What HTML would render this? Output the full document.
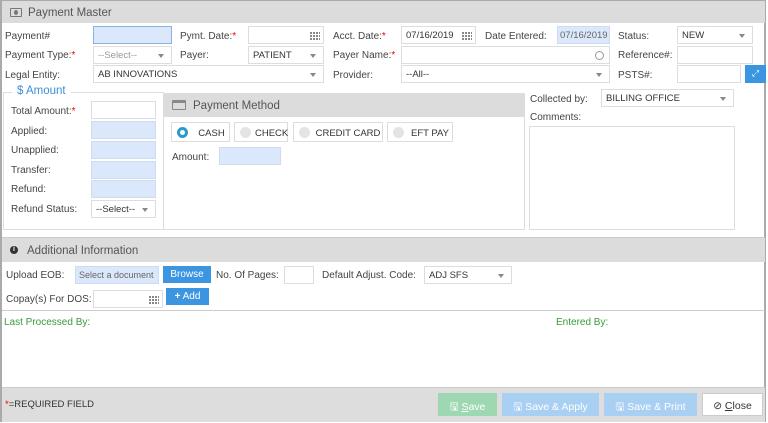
<!DOCTYPE html>
<html><head><style>
*{box-sizing:border-box;margin:0;padding:0}
body{width:768px;height:423px;background:#fff;font-family:"Liberation Sans",sans-serif;font-size:10px;color:#444;position:relative;overflow:hidden}
.a{position:absolute}
.l{position:absolute;white-space:nowrap;font-size:10px;color:#444}
.r{color:#e00}
.in{position:absolute;border:1px solid #ddd;background:#fff;height:18px}
.bl{background:#dbe8fb;border-color:#cfdcef}
.sel{position:absolute;border:1px solid #ddd;background:#fff;height:18px;padding:3px 4px;font-size:9.5px;color:#333;white-space:nowrap}
.sel:after{content:"";position:absolute;right:7px;top:7px;border:3.5px solid transparent;border-top:4px solid #888}
.cal{position:absolute;right:3px;top:4px;width:10px;height:9px;background:repeating-linear-gradient(90deg,#888 0 2px,#fff 2px 3px);}
.cal:before{content:"";position:absolute;inset:0;background:repeating-linear-gradient(0deg,transparent 0 2px,#fff 2px 3px)}
.hd{position:absolute;background:#dcdcdc;color:#555;font-size:11.5px}
.rb{position:absolute;border:1px solid #ddd;height:20px;top:122px;font-size:9.5px;color:#333;padding-top:5px;text-align:center}
.dot{position:absolute;left:5px;top:4px;width:11px;height:11px;border-radius:50%;background:#e4e4e4}
.btn{position:absolute;top:393px;height:23px;color:#fff;font-size:10.5px;text-align:center;padding-top:6px}
</style></head><body>
<div class="a" style="left:0;top:0;width:766px;height:422px;border:2px solid #aaa;border-top:1px solid #aaa"></div>
<div class="hd" style="left:2px;top:1px;width:763px;height:22px;padding:6px 0 0 26px">Payment Master</div>
<div class="a" style="left:10px;top:8px;width:12px;height:9px;border:1.5px solid #777;border-radius:1px"></div>
<div class="a" style="left:14px;top:10px;width:4px;height:5px;background:#777;border-radius:50%"></div>

<div class="l" style="left:5px;top:31px">Payment#</div>
<div class="in bl" style="left:93px;top:26px;width:79px;border-color:#8ab4e0"></div>
<div class="l" style="left:180px;top:31px">Pymt. Date:<span class="r">*</span></div>
<div class="in" style="left:248px;top:26px;width:76px"><div class="cal"></div></div>
<div class="l" style="left:333px;top:31px">Acct. Date:<span class="r">*</span></div>
<div class="in" style="left:401px;top:26px;width:75px;font-size:9.5px;color:#333;padding:3px 4px">07/16/2019<div class="cal"></div></div>
<div class="l" style="left:485px;top:31px">Date Entered:</div>
<div class="in bl" style="left:557px;top:26px;width:53px;font-size:9.5px;color:#666;padding:3px 2px">07/16/2019</div>
<div class="l" style="left:618px;top:31px">Status:</div>
<div class="sel" style="left:677px;top:26px;width:76px">NEW</div>

<div class="l" style="left:5px;top:50px">Payment Type:<span class="r">*</span></div>
<div class="sel" style="left:93px;top:46px;width:79px;color:#999">--Select--</div>
<div class="l" style="left:180px;top:50px">Payer:</div>
<div class="sel" style="left:248px;top:46px;width:76px">PATIENT</div>
<div class="l" style="left:333px;top:50px">Payer Name:<span class="r">*</span></div>
<div class="in" style="left:401px;top:46px;width:209px"><div class="a" style="right:5px;top:4px;width:9px;height:9px;border:1px solid #999;border-radius:50%"></div></div>
<div class="l" style="left:618px;top:50px">Reference#:</div>
<div class="in" style="left:677px;top:46px;width:76px"></div>

<div class="l" style="left:5px;top:70px">Legal Entity:</div>
<div class="sel" style="left:93px;top:65px;width:231px">AB INNOVATIONS</div>
<div class="l" style="left:333px;top:70px">Provider:</div>
<div class="sel" style="left:401px;top:65px;width:209px">--All--</div>
<div class="l" style="left:618px;top:70px">PSTS#:</div>
<div class="in" style="left:677px;top:65px;width:64px"></div>
<div class="a" style="left:745px;top:65px;width:21px;height:18px;background:#3b95e0;color:#fff;text-align:center;font-size:9px;padding-top:3px">⤢</div>

<div class="a" style="left:3px;top:92px;width:161px;height:138px;border:1px solid #ddd"></div>
<div class="l" style="left:12px;top:85px;background:#fff;padding:0 5px;color:#3a8fd8;font-size:11.5px">$ Amount</div>
<div class="l" style="left:11px;top:106px">Total Amount:<span class="r">*</span></div>
<div class="in" style="left:91px;top:101px;width:65px"></div>
<div class="l" style="left:11px;top:126px">Applied:</div>
<div class="in bl" style="left:91px;top:121px;width:65px"></div>
<div class="l" style="left:11px;top:145px">Unapplied:</div>
<div class="in bl" style="left:91px;top:141px;width:65px"></div>
<div class="l" style="left:11px;top:165px">Transfer:</div>
<div class="in bl" style="left:91px;top:161px;width:65px"></div>
<div class="l" style="left:11px;top:184px">Refund:</div>
<div class="in bl" style="left:91px;top:180px;width:65px"></div>
<div class="l" style="left:11px;top:204px">Refund Status:</div>
<div class="sel" style="left:91px;top:200px;width:65px">--Select--</div>

<div class="a" style="left:163px;top:93px;width:362px;height:137px;border:1px solid #ddd"></div>
<div class="hd" style="left:164px;top:94px;width:360px;height:23px;padding:6px 0 0 29px">Payment Method</div>
<div class="a" style="left:172px;top:100px;width:14px;height:10px;border:1.5px solid #888;border-radius:1px;border-top-width:3px"></div>
<div class="rb" style="left:171px;width:59px;padding-left:22px"><div class="dot" style="background:#fff;border:3px solid #2a9bc9"></div>CASH</div>
<div class="rb" style="left:234px;width:54px;padding-left:20px"><div class="dot"></div>CHECK</div>
<div class="rb" style="left:293px;width:90px;padding-left:20px"><div class="dot"></div>CREDIT CARD</div>
<div class="rb" style="left:387px;width:66px;padding-left:20px"><div class="dot"></div>EFT PAY</div>
<div class="l" style="left:172px;top:152px">Amount:</div>
<div class="in bl" style="left:219px;top:147px;width:62px"></div>

<div class="l" style="left:530px;top:94px">Collected by:</div>
<div class="sel" style="left:601px;top:89px;width:133px">BILLING OFFICE</div>
<div class="l" style="left:530px;top:112px">Comments:</div>
<div class="in" style="left:529px;top:126px;width:206px;height:104px"></div>

<div class="a" style="left:2px;top:237px;width:763px;height:1px;background:#ccc"></div>
<div class="hd" style="left:2px;top:238px;width:763px;height:24px;padding:7px 0 0 25px">Additional Information</div>
<div class="a" style="left:10px;top:246px;width:8px;height:8px;border-radius:50%;background:#333;color:#fff;font-size:7px;text-align:center;line-height:8px;font-weight:bold">i</div>

<div class="l" style="left:6px;top:270px">Upload EOB:</div>
<div class="in bl" style="left:75px;top:266px;width:84px;font-size:9px;color:#666;padding:3px 3px">Select a document</div>
<div class="a" style="left:163px;top:266px;width:48px;height:17px;background:#3b95e0;color:#fff;font-size:10px;text-align:center;padding-top:3px">Browse</div>
<div class="l" style="left:216px;top:270px">No. Of Pages:</div>
<div class="in" style="left:284px;top:266px;width:30px"></div>
<div class="l" style="left:322px;top:270px">Default Adjust. Code:</div>
<div class="sel" style="left:424px;top:266px;width:88px">ADJ SFS</div>
<div class="l" style="left:6px;top:294px">Copay(s) For DOS:</div>
<div class="in" style="left:93px;top:290px;width:70px"><div class="cal"></div></div>
<div class="a" style="left:166px;top:288px;width:43px;height:17px;background:#3b95e0;color:#fff;font-size:10px;text-align:center;padding-top:3px"><b>+</b> Add</div>
<div class="a" style="left:2px;top:310px;width:763px;height:1px;background:#ccc"></div>
<div class="l" style="left:4px;top:317px;color:#3a9a3a">Last Processed By:</div>
<div class="l" style="left:556px;top:317px;color:#3a9a3a">Entered By:</div>

<div class="a" style="left:2px;top:387px;width:763px;height:35px;background:#ddd;border-top:1px solid #ccc"></div>
<div class="l" style="left:5px;top:399px;color:#333;font-size:9.5px"><span class="r">*</span>=REQUIRED FIELD</div>
<div class="btn" style="left:438px;width:59px;background:#9ed8b3">🖫 <u>S</u>ave</div>
<div class="btn" style="left:502px;width:97px;background:#a9d0f3">🖫 Save &amp; Apply</div>
<div class="btn" style="left:604px;width:93px;background:#a9d0f3">🖫 Save &amp; Print</div>
<div class="btn" style="left:702px;width:61px;background:#fff;color:#333;border:1px solid #ccc">⊘ <u>C</u>lose</div>
</body></html>
